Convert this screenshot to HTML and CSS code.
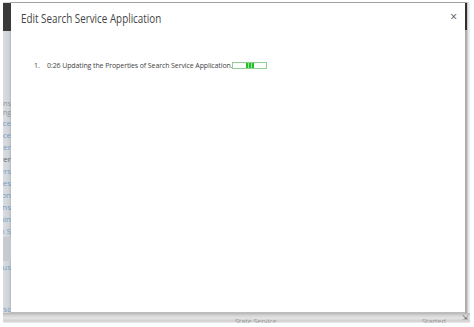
FILE: index.html
```html
<!DOCTYPE html>
<html>
<head>
<meta charset="utf-8">
<link rel="stylesheet" href="styles.css">
</head>
<body>
<div class="frame">
  <div class="side">
    <div class="side-top"></div>
    <div class="side-links">
      <div class="ln grey" style="margin-top:68px">Permissions</div>
      <div class="ln grey">Crawling</div>
      <div class="ln">Search Service</div>
      <div class="ln">Service</div>
      <div class="ln">Search Center</div>
      <div class="ln dark">Server</div>
      <div class="ln">Farm Servers</div>
      <div class="ln">Services</div>
      <div class="ln">Application</div>
      <div class="ln">Applications</div>
      <div class="ln">Search Admin</div>
      <div class="ln">Search S</div>
      <div class="ln band">&nbsp;</div>
      <div class="ln">Status</div>
      <div class="ln" style="margin-top:30px">Data Disc</div>
    </div>
  </div>
  <div class="dialog">
    <div class="dlg-head">
      <h1 class="title">Edit Search Service Application</h1>
      <span class="close">×</span>
    </div>
    <ol class="steps">
      <li class="step"><span class="num">1.</span><span class="txt">0:26 Updating the Properties of Search Service Application.</span><span class="bar"><span class="fill"></span></span></li>
    </ol>
  </div>
  <div class="rside">
    <div class="rside-top"></div>
  </div>
  <div class="foot">
    <span class="f1">State Service</span>
    <span class="f2">Started</span>
    <span class="grip">⇲</span>
  </div>
</div>
</body>
</html>
```
FILE: styles.css
```css
html, body { margin: 0; padding: 0; background: #fff; }
body { width: 474px; height: 327px; overflow: hidden; font-family: "Open Sans", "Liberation Sans", sans-serif; }

.frame {
  margin: 2px 0 0 3px;
  width: 467px;
  height: 321px;
  display: grid;
  grid-template-columns: 8px 454px 5px;
  grid-template-rows: 311px 10px;
  background: #dcdcdc;
}

.side {
  background: linear-gradient(to right, #d9dde1 0%, #cfd4d9 70%, #b9bcbf 100%);
  display: flex;
  flex-direction: column;
  overflow: hidden;
}
.side-top { height: 28px; margin-top: 1px; background: #3a3a3a; flex: none; }
.side-links { display: flex; flex-direction: column; }
.ln {
  display: flex;
  justify-content: flex-end;
  white-space: nowrap;
  font-size: 8px;
  line-height: 12px;
  color: #6a93c2;
  opacity: .85;
}
.ln.grey { color: #888; font-size: 7px; line-height: 9px; }
.ln.dark { color: #555; }
.ln.band { background: #c5c9ce; height: 24px; }

.dialog {
  background: #fff;
  border-top: 1px solid #a0a0a0;
  display: flex;
  flex-direction: column;
  box-shadow: inset 0 -1px 0 #bdbdbd;
}
.dlg-head {
  display: flex;
  justify-content: space-between;
  align-items: flex-start;
  padding: 8px 8px 0 10px;
}
.title {
  margin: 0;
  font-weight: 400;
  font-size: 12px;
  line-height: 16px;
  color: #444;
  transform: scaleX(0.82);
  transform-origin: left center;
  white-space: nowrap;
}
.close { font-size: 12px; line-height: 12px; color: #555; margin-top: 0; }

.steps { list-style: none; margin: 34px 0 0 23px; padding: 0; }
.step {
  display: flex;
  align-items: center;
  font-size: 7px;
  line-height: 10px;
  color: #444;
  white-space: nowrap;
}
.num { width: 13px; }
.txt { letter-spacing: -0.1px; }
.bar {
  width: 33px;
  height: 5px;
  border: 1px solid #8fcf8f;
  margin-top: -2px;
  display: flex;
  justify-content: center;
  align-items: center;
}
.fill {
  width: 8px;
  height: 5px;
  background: repeating-linear-gradient(to right, #22c02a 0 2px, #9de39f 2px 3px);
}

.rside {
  background: linear-gradient(to right, #a8a8a8 0, #b5b5b5 2px, #e2e2e2 3px, #f4f4f4 100%);
  display: flex;
  flex-direction: column;
}
.rside-top { width: 2px; height: 27px; background: #2e2e2e; margin-top: 1px; }

.foot {
  grid-column: 1 / 4;
  background: linear-gradient(to bottom, #b5b5b5 0, #cfcfcf 2px, #e4e4e4 5px, #d0d0d0 8px, #ececec 10px);
  position: relative;
  overflow: hidden;
  font-size: 7px;
  color: #9a9a9a;
}
.f1 { position: absolute; left: 232px; top: 4px; }
.f2 { position: absolute; left: 419px; top: 4px; }
.grip { position: absolute; left: 459px; top: 0; font-size: 7px; color: #666; }
```
